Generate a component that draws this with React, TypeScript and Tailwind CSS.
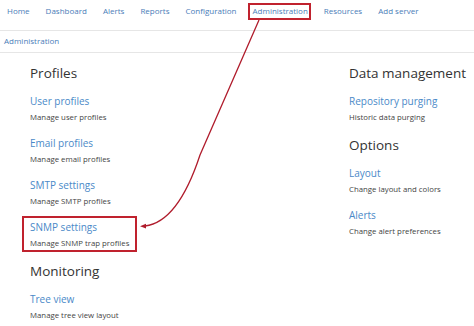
import React from 'react';

const navItems = ['Home', 'Dashboard', 'Alerts', 'Reports', 'Configuration', 'Administration', 'Resources', 'Add server'];

type Item = { title: string; desc: string; highlight?: boolean };
type Section = { heading: string; items: Item[] };

const leftSections: Section[] = [
  {
    heading: 'Profiles',
    items: [
      { title: 'User profiles', desc: 'Manage user profiles' },
      { title: 'Email profiles', desc: 'Manage email profiles' },
      { title: 'SMTP settings', desc: 'Manage SMTP profiles' },
      { title: 'SNMP settings', desc: 'Manage SNMP trap profiles', highlight: true },
    ],
  },
  {
    heading: 'Monitoring',
    items: [{ title: 'Tree view', desc: 'Manage tree view layout' }],
  },
];

const rightSections: Section[] = [
  {
    heading: 'Data management',
    items: [{ title: 'Repository purging', desc: 'Historic data purging' }],
  },
  {
    heading: 'Options',
    items: [
      { title: 'Layout', desc: 'Change layout and colors' },
      { title: 'Alerts', desc: 'Change alert preferences' },
    ],
  },
];

const SectionBlock: React.FC<{ section: Section }> = ({ section }) => (
  <div className="mb-[12px]">
    <h2 className="h-[20px] whitespace-nowrap text-[13.5px] leading-[20px] text-[#333]">{section.heading}</h2>
    <div className="mt-[11px] flex flex-col gap-[13px]">
      {section.items.map((item) => (
        <div key={item.title} className="relative whitespace-nowrap">
          {/* annotation box */}
          {item.highlight && (
            <div className="absolute -left-[8px] -top-[4px] h-[36px] w-[115px] border-2 border-[#c0222e]" />
          )}
          <div className="text-[10px] leading-[15px] text-[#4a89c8]">{item.title}</div>
          <div className="mt-[2px] text-[7.8px] leading-[12px] text-[#444]">{item.desc}</div>
        </div>
      ))}
    </div>
  </div>
);

const App: React.FC = () => {
  return (
    <div
      className="relative h-[326px] w-[474px] overflow-hidden bg-white"
      style={{ fontFamily: '"Open Sans", "Noto Sans", sans-serif' }}
    >
      <nav className="flex h-[31px] gap-[16px] border-b border-[#e6e6e6] pl-[7px] pt-[4px]">
        {navItems.map((label) => (
          <div key={label} className="relative h-[14px] whitespace-nowrap text-[8px] leading-[14px] text-[#4a7db8]">
            {label}
            {label === 'Administration' && (
              <div className="absolute -left-[5px] -top-[1px] h-[17px] w-[63px] border-2 border-[#c0222e]" />
            )}
          </div>
        ))}
      </nav>

      <div className="flex h-[22px] items-center border-b border-[#e6e6e6] pb-[1px] pl-[4px] text-[8px] text-[#4a7db8]">
        Administration
      </div>

      <div className="grid grid-cols-[319px_1fr] pl-[30px] pt-[10px]">
        <div>
          {leftSections.map((s) => (
            <SectionBlock key={s.heading} section={s} />
          ))}
        </div>
        <div>
          {rightSections.map((s) => (
            <SectionBlock key={s.heading} section={s} />
          ))}
        </div>
      </div>

      {/* annotation arrow */}
      <svg className="pointer-events-none absolute left-0 top-0" width="474" height="326" viewBox="0 0 474 326">
        <path d="M259 20 L200 155 Q178 222 145 226" fill="none" stroke="#b01c2c" strokeWidth="1.3" />
        <path d="M140 226.3 L146 223.8 L146 228.6 Z" fill="#b01c2c" />
      </svg>
    </div>
  );
};

export default App;
